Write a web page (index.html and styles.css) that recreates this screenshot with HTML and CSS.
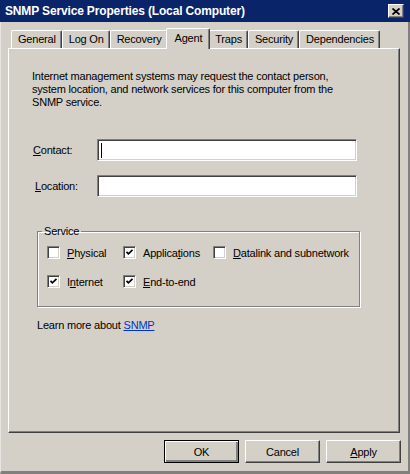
FILE: index.html
```html
<!DOCTYPE html>
<html lang="en">
<head>
    <meta charset="UTF-8">
    <title>SNMP Service Properties (Local Computer)</title>
    <link rel="stylesheet" href="styles.css">
</head>
<body>
<div class="window">
    <div class="titlebar">
        <span class="title">SNMP Service Properties (Local Computer)</span>
        <span class="close">
            <svg width="8" height="7" viewBox="0 0 8 7">
                <path d="M0.5 0.5 L7.5 6.5 M7.5 0.5 L0.5 6.5" stroke="#000" stroke-width="1.7" fill="none"/>
            </svg>
        </span>
    </div>

    <div class="tabs">
        <div class="tab">General</div>
        <div class="tab">Log On</div>
        <div class="tab">Recovery</div>
        <div class="tab active">Agent</div>
        <div class="tab">Traps</div>
        <div class="tab">Security</div>
        <div class="tab">Dependencies</div>
    </div>

    <div class="panel">
        <p class="intro">
            Internet management systems may request the contact person,<br>
            system location, and network services for this computer from the<br>
            SNMP service.
        </p>

        <div class="fields">
            <label class="field-label"><u>C</u>ontact:</label>
            <div class="textbox"><span class="caret"></span></div>
            <label class="field-label loc"><u>L</u>ocation:</label>
            <div class="textbox"></div>
        </div>

        <fieldset class="group">
            <legend>Service</legend>
            <div class="checks">
                <label class="check"><span class="box"></span><span><u>P</u>hysical</span></label>
                <label class="check"><span class="box checked"><svg width="9" height="9" viewBox="0 0 9 9"><path d="M1.5 3.8 L3.4 5.8 L7.5 1.8" stroke="#000" stroke-width="1.7" fill="none"/></svg></span><span>Applica<u>t</u>ions</span></label>
                <label class="check"><span class="box"></span><span><u>D</u>atalink and subnetwork</span></label>
                <label class="check"><span class="box checked"><svg width="9" height="9" viewBox="0 0 9 9"><path d="M1.5 3.8 L3.4 5.8 L7.5 1.8" stroke="#000" stroke-width="1.7" fill="none"/></svg></span><span>I<u>n</u>ternet</span></label>
                <label class="check"><span class="box checked"><svg width="9" height="9" viewBox="0 0 9 9"><path d="M1.5 3.8 L3.4 5.8 L7.5 1.8" stroke="#000" stroke-width="1.7" fill="none"/></svg></span><span><u>E</u>nd-to-end</span></label>
            </div>
        </fieldset>

        <p class="learn">Learn more about <a href="#">SNMP</a></p>
    </div>

    <div class="buttons">
        <button class="btn default">OK</button>
        <button class="btn">Cancel</button>
        <button class="btn"><u>A</u>pply</button>
    </div>
</div>
</body>
</html>
```

FILE: styles.css
```css
body {
    margin: 0;
    font-family: "Liberation Sans", Arial, sans-serif;
    font-size: 11px;
    letter-spacing: -0.2px;
    color: #000;
    background: #d4d0c8;
}
.window {
    width: 410px;
    height: 474px;
    box-sizing: border-box;
    background: #d4d0c8;
    display: flex;
    flex-direction: column;
    border-left: 1px solid #e8e6e2;
    border-right: 2px solid #808080;
    border-bottom: 3px solid #808080;
}
.titlebar {
    height: 22px;
    margin-left: -1px;
    margin-right: -2px;
    background: #0a246a;
    display: flex;
    align-items: center;
    justify-content: space-between;
    padding: 0 6px 0 5px;
}
.title {
    color: #fff;
    font-weight: bold;
    font-size: 12px;
    letter-spacing: -0.15px;
}
.close {
    width: 14px;
    height: 12px;
    background: #d4d0c8;
    border: 1px solid;
    border-color: #fff #404040 #404040 #fff;
    box-shadow: inset -1px -1px #808080;
    display: flex;
    align-items: center;
    justify-content: center;
}

.tabs {
    display: flex;
    align-items: flex-end;
    height: 20px;
    margin-top: 6px;
    padding-left: 10px;
}
.tab {
    height: 18px;
    box-sizing: border-box;
    padding: 0 5px 0 6px;
    line-height: 17px;
    border: 1px solid;
    border-color: #fff #404040 transparent #fff;
    border-bottom: none;
    border-radius: 2px 2px 0 0;
    box-shadow: inset -1px 0 #808080;
    background: #d4d0c8;
}
.tab.active {
    height: 21px;
    margin: 0 -2px -1px;
    padding: 0 7px 0 8px;
    line-height: 18px;
    position: relative;
    z-index: 1;
}

.panel {
    height: 385px;
    box-sizing: border-box;
    margin: 0 8px 0 7px;
    border: 1px solid;
    border-color: #fff #404040 #404040 #fff;
    box-shadow: inset -1px -1px #808080;
    padding: 21px 0 0 23px;
}
.intro {
    margin: 0;
    line-height: 13px;
}
.fields {
    display: grid;
    grid-template-columns: 65px 260px;
    grid-template-rows: 22px 22px;
    row-gap: 14px;
    align-items: center;
    margin-top: 30px;
}
.field-label {
    padding-left: 1px;
}
.field-label.loc {
    padding-left: 3px;
}
.textbox {
    height: 22px;
    box-sizing: border-box;
    background: #fff;
    border: 1px solid;
    border-color: #808080 #fff #fff #808080;
    box-shadow: inset 1px 1px #404040, inset -1px -1px #d4d0c8;
    padding: 3px 0 0 3px;
}
.caret {
    display: block;
    width: 1px;
    height: 15px;
    background: #000;
}

.group {
    margin: 28px 0 0 5px;
    width: 323px;
    box-sizing: border-box;
    padding: 0 0 18px 4px;
    border: 1px solid #808080;
    box-shadow: inset 1px 1px #fff, 1px 1px #fff;
}
.group legend {
    padding: 0 2px;
    line-height: 13px;
}
.checks {
    display: grid;
    grid-template-columns: 76px 90px auto;
    row-gap: 16px;
    margin: 8px 0 0 5px;
}
.check {
    display: flex;
    align-items: center;
    gap: 7px;
    height: 13px;
}
.box {
    width: 13px;
    height: 13px;
    box-sizing: border-box;
    background: #fff;
    border: 1px solid;
    border-color: #808080 #fff #fff #808080;
    box-shadow: inset 1px 1px #404040, inset -1px -1px #d4d0c8;
    display: flex;
    align-items: center;
    justify-content: center;
    flex: none;
}

.learn {
    margin: 12px 0 0 5px;
}
.learn a {
    color: #0033cc;
}

.buttons {
    display: flex;
    justify-content: flex-end;
    gap: 6px;
    margin-top: 7px;
    padding-right: 7px;
}
.btn {
    width: 75px;
    height: 23px;
    box-sizing: border-box;
    font-family: inherit;
    font-size: 11px;
    letter-spacing: -0.2px;
    color: #000;
    background: #d4d0c8;
    border: 1px solid;
    border-color: #fff #404040 #404040 #fff;
    box-shadow: inset -1px -1px #808080;
    padding: 0;
}
.btn.default {
    border: 1px solid #000;
    box-shadow: inset 1px 1px #fff, inset -2px -2px #808080;
}
```
